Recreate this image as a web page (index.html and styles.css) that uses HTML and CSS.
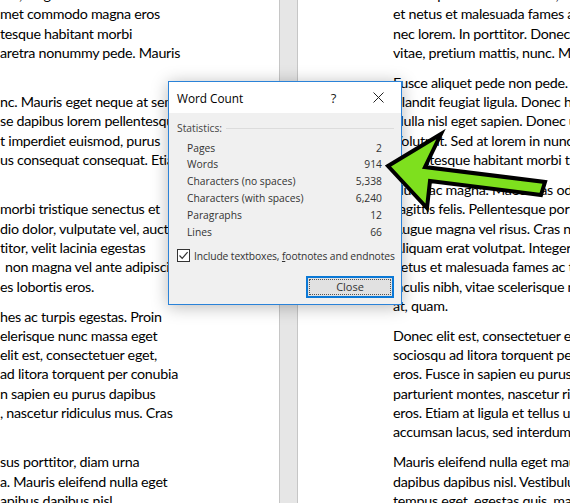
FILE: index.html
```html
<!DOCTYPE html>
<html>
<head>
<meta charset="utf-8">
<link rel="stylesheet" href="styles.css">
</head>
<body>
<div class="desk">
  <div class="page page-left">
    <div class="text">
      <p>tae, ma<span class="g">g</span>na sed ultricies<br>met commodo magna eros<br>tesque habitant morbi<br>aretra nonummy pede. Mauris<br>&nbsp;</p>
      <p>nc. Mauris eget neque at sem venenatis<br>se dapibus lorem pellentesque magna<br>t imperdiet euismod, purus<br>us consequat consequat. Etiam eget<br>&nbsp;</p>
      <p>morbi tristique senectus et<br>dio dolor, vulputate vel, auctor ac<br>titor, velit lacinia egestas<br><span class="ind">non magna vel ante adipiscing</span><br>es lobortis eros.</p>
      <p>hes ac turpis egestas. Proin<br>elerisque nunc massa eget<br>elit est, consectetuer eget,<br>ad litora torquent per conubia<br>n sapien eu purus dapibus<br>, nascetur ridiculus mus. Cras<br>&nbsp;</p>
      <p>sus porttitor, diam urna<br>a. Mauris eleifend nulla eget<br>apibus dapibus nisl.</p>
    </div>
  </div>
  <div class="page page-right">
    <div class="text">
      <p>Lorem ipsum dolor sit amet, consectetuer adipiscing<br>et netus et malesuada fames ac turpis<br>nec lorem. In porttitor. Donec laoreet<br>vitae, pretium mattis, nunc. Mauris</p>
      <p>Fusce aliquet pede non pede. Suspendisse<br>Blandit feugiat ligula. Donec hendrerit<br>Nulla nisl eget sapien. Donec ut est<br>Volutpat. Sed at lorem in nunc porta<br>Pellentesque habitant morbi tristique</p>
      <p>Nunc ac magna. Maecenas odio dolor<br>sagittis felis. Pellentesque porttitor<br>Augue magna vel risus. Cras non magna<br>Aliquam erat volutpat. Integer ut<br>netus et malesuada fames ac turpis<br>iaculis nibh, vitae scelerisque nunc<br>at, quam.</p>
      <p>Donec elit est, consectetuer eget,<br>sociosqu ad litora torquent per conubia<br>eros. Fusce in sapien eu purus dapibus<br>parturient montes, nascetur ridiculus<br>eros. Etiam at ligula et tellus ullamcorper<br>accumsan lacus, sed interdum wisi</p>
      <p>Mauris eleifend nulla eget mauris<br>dapibus dapibus nisl. Vestibulum quis<br>tempus eget, egestas quis, mauris</p>
    </div>
  </div>
</div>

<div class="dlg">
  <div class="dlg-title">
    <span class="dlg-name">Word Count</span>
    <span class="tbtn help">?</span>
    <span class="tbtn">
      <svg class="xicon" width="11" height="11" viewBox="0 0 11 11"><path d="M0.5 0.5 L10.5 10.5 M10.5 0.5 L0.5 10.5" stroke="#222" stroke-width="1" fill="none"/></svg>
    </span>
  </div>
  <div class="dlg-body">
    <div class="group-label"><span>Statistics:</span><span class="rule"></span></div>
    <div class="stats">
      <span>Pages</span><span class="v">2</span>
      <span>Words</span><span class="v">914</span>
      <span>Characters (no spaces)</span><span class="v">5,338</span>
      <span>Characters (with spaces)</span><span class="v">6,240</span>
      <span>Paragraphs</span><span class="v">12</span>
      <span>Lines</span><span class="v">66</span>
    </div>
    <div class="chk">
      <span class="box"><svg width="11" height="11" viewBox="0 0 11 11"><path d="M1.5 5.5 L4.2 8.3 L9.6 2.2" stroke="#333" stroke-width="1.2" fill="none"/></svg></span>
      <span class="chk-label">Include textboxes, <u>f</u>ootnotes and endnotes</span>
    </div>
    <div class="btn-row">
      <div class="btn"><div class="focus">Close</div></div>
    </div>
  </div>
</div>

<svg class="arrow" width="570" height="503" viewBox="0 0 570 503">
  <polygon points="388,166 441,134 425,167 545,182 541,195 430,181 427,208" fill="#7ee01e" stroke="#000" stroke-width="4" stroke-linejoin="miter"/>
</svg>
</body>
</html>
```

FILE: styles.css
```css
html, body {
  margin: 0;
  padding: 0;
}
body {
  width: 570px;
  height: 503px;
  overflow: hidden;
  position: relative;
  background: #e6e6e6;
  font-family: Lato, "Open Sans", sans-serif;
}
.desk {
  display: flex;
  height: 503px;
}
.page {
  background: #fff;
  overflow: hidden;
  height: 503px;
}
.page-left {
  width: 279px;
  flex: none;
  border-right: 1px solid #c6c6c6;
}
.page-right {
  flex: 1;
  margin-left: 17px;
  border-left: 1px solid #c6c6c6;
}
.text {
  font-size: 14.3px;
  letter-spacing: -0.28px;
  line-height: 19.3px;
  color: #000;
  margin-top: -15px;
  white-space: nowrap;
}
.page-right .text {
  padding-left: 95px;
}
.text p {
  margin: 0 0 10.7px;
}
.ind {
  padding-left: 5px;
}

/* dialog */
.dlg {
  position: absolute;
  left: 168px;
  top: 81px;
  width: 232px;
  height: 222px;
  border: 1px solid #2a82d8;
  background: #f0f0f0;
  box-shadow: 0 2px 16px rgba(0, 0, 0, 0.28);
  font-family: "Open Sans", sans-serif;
  display: flex;
  flex-direction: column;
}
.dlg-title {
  height: 31px;
  background: #fff;
  display: flex;
  align-items: center;
  padding-left: 8px;
  font-size: 11.8px;
  color: #000;
}
.dlg-name {
  flex: 1;
}
.tbtn {
  width: 45px;
  height: 31px;
  display: flex;
  align-items: center;
  justify-content: center;
}
.help {
  font-size: 13px;
  color: #222;
}
.dlg-body {
  flex: 1;
  padding: 8px 7px 6px 8px;
  display: flex;
  flex-direction: column;
  font-size: 10.3px;
  color: #333;
}
.group-label {
  display: flex;
  align-items: center;
  line-height: 14px;
  color: #444;
}
.rule {
  flex: 1;
  height: 1px;
  background: #dcdcdc;
  margin-left: 4px;
}
.stats {
  display: grid;
  grid-template-columns: 1fr auto;
  line-height: 16.9px;
  margin-top: 4.5px;
  padding: 0 12px 0 10px;
}
.v {
  text-align: right;
}
.chk {
  display: flex;
  align-items: center;
  margin-top: 8px;
  line-height: 14px;
  white-space: nowrap;
}
.chk-label {
  letter-spacing: -0.12px;
}
.box {
  width: 11px;
  height: 11px;
  border: 1px solid #333;
  background: #fff;
  margin-right: 4px;
  display: flex;
  flex: none;
}
.btn-row {
  margin-top: auto;
  display: flex;
  justify-content: flex-end;
}
.btn {
  width: 84px;
  height: 18px;
  border: 2px solid #0a78d6;
  background: #e1e1e1;
  display: flex;
}
.focus {
  flex: 1;
  margin: 1px;
  border: 1px dotted #555;
  display: flex;
  align-items: center;
  justify-content: center;
  font-size: 11px;
  line-height: 14px;
  color: #333;
}

.arrow {
  position: absolute;
  left: 0;
  top: 0;
  pointer-events: none;
}
```
